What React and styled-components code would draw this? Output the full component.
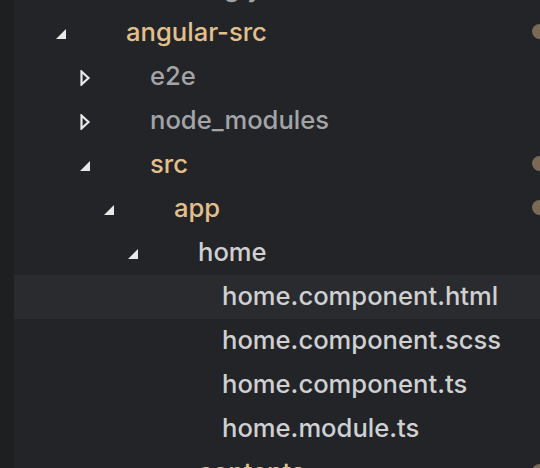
import React from "react";
import styled, { createGlobalStyle } from "styled-components";

const GlobalStyle = createGlobalStyle`
	html, body {
		margin: 0;
		padding: 0;
		background: #232427;
	}
	body {
		font-family: Inter, "Noto Sans", "Liberation Sans", sans-serif;
	}
`;

const tree = [
	{ name: "_config.yml", depth: 1, kind: "file", tone: "dim" },
	{ name: "angular-src", depth: 0, kind: "open", tone: "mod", dot: true },
	{ name: "e2e", depth: 1, kind: "closed", tone: "dim" },
	{ name: "node_modules", depth: 1, kind: "closed", tone: "dim" },
	{ name: "src", depth: 1, kind: "open", tone: "mod", dot: true },
	{ name: "app", depth: 2, kind: "open", tone: "mod", dot: true },
	{ name: "home", depth: 3, kind: "open", tone: "plain" },
	{ name: "home.component.html", depth: 4, kind: "file", tone: "plain", selected: true },
	{ name: "home.component.scss", depth: 4, kind: "file", tone: "plain" },
	{ name: "home.component.ts", depth: 4, kind: "file", tone: "plain" },
	{ name: "home.module.ts", depth: 4, kind: "file", tone: "plain" },
	{ name: "contents", depth: 3, kind: "open", tone: "mod", dot: true },
];

const tones = {
	mod: "#e2c08d",
	dim: "#a2a4a8",
	plain: "#cfd0d2",
};

const Arrow = ({ kind }) => {
	if (kind === "open")
		return (
			<svg width='12' height='12' viewBox='0 0 12 12'>
				<path d='M11 1 L11 11 L1 11 Z' fill='#e8e8e8' />
			</svg>
		);
	if (kind === "closed")
		return (
			<svg width='12' height='16' viewBox='0 0 12 16'>
				<path
					d='M2.5 1.5 L9.5 8 L2.5 14.5 Z'
					fill='none'
					stroke='#e8e8e8'
					strokeWidth='2.2'
					strokeLinejoin='miter'
				/>
			</svg>
		);
	return null;
};

const TreeView = () => {
	return (
		<Wrapper>
			<GlobalStyle />
			<Gutter />
			<Panel>
				<List>
					{tree.map((item, i) => (
						<Row key={i} $depth={item.depth} $selected={item.selected}>
							<Twisty>
								<Arrow kind={item.kind} />
							</Twisty>
							<Label $tone={item.tone}>{item.name}</Label>
							{item.dot && <Dot />}
						</Row>
					))}
				</List>
			</Panel>
		</Wrapper>
	);
};

const Wrapper = styled.main`
	display: grid;
	grid-template-columns: 14px 1fr;
	width: 540px;
	height: 468px;
	overflow: hidden;
`;

const Gutter = styled.div`
	background: #1e1f21;
`;

const Panel = styled.section`
	background: #232427;
	overflow: hidden;
`;

const List = styled.ul`
	list-style: none;
	margin: -33px 0 0;
	padding: 0;
	display: flex;
	flex-direction: column;
`;

const Row = styled.li`
	display: flex;
	align-items: center;
	height: 44px;
	padding-left: ${({ $depth }) => 41 + $depth * 24}px;
	background: ${({ $selected }) => ($selected ? "#2a2b2f" : "transparent")};
`;

const Twisty = styled.span`
	display: flex;
	align-items: center;
	justify-content: center;
	width: 12px;
	height: 16px;
	margin-right: 59px;
	margin-top: 2px;
	flex-shrink: 0;
`;

const Label = styled.span`
	flex: 1;
	font-size: 25.6px;
	font-weight: 450;
	line-height: 1;
	color: ${({ $tone }) => tones[$tone]};
	white-space: nowrap;
	padding-bottom: 2px;
`;

const Dot = styled.span`
	width: 15px;
	height: 15px;
	border-radius: 50%;
	background: #7a6a55;
	margin-right: -7px;
	margin-top: -4px;
	flex-shrink: 0;
`;

export default function App() {
	return <TreeView />;
}
